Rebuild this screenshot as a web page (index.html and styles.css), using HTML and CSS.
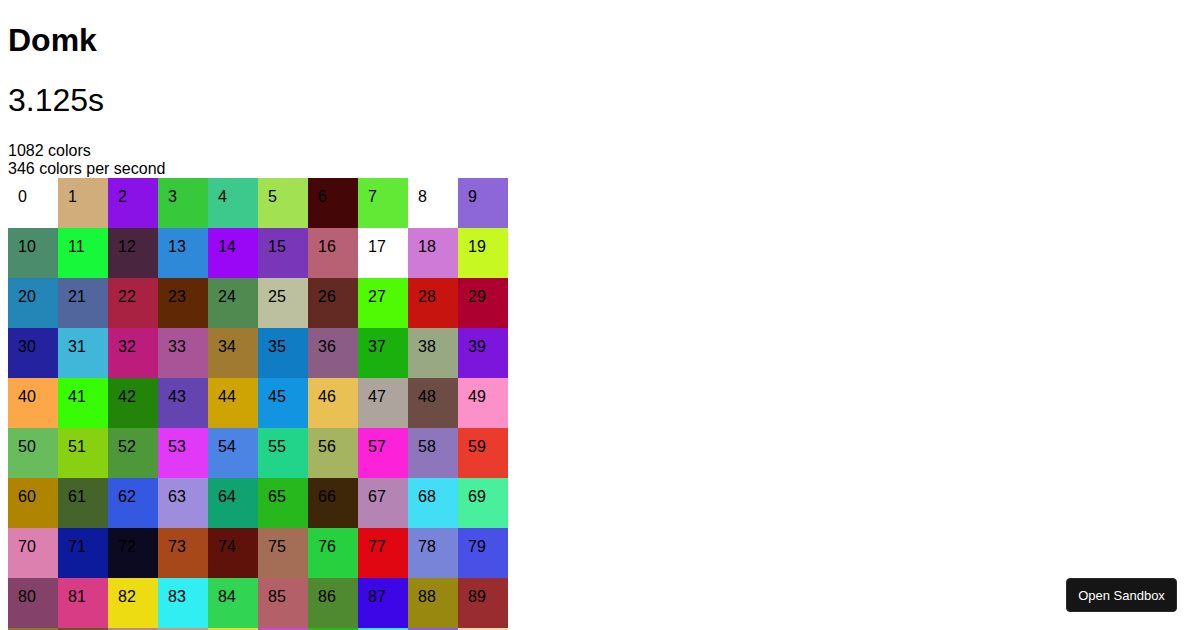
FILE: index.html
```html
<!DOCTYPE html>
<html lang="en">
<head>
<meta charset="utf-8">
<title>Domk</title>
<link rel="stylesheet" href="styles.css">
</head>
<body>
<h1 class="title">Domk</h1>
<h2 class="time">3.125s</h2>
<div class="stats">
  <div>1082 colors</div>
  <div>346 colors per second</div>
</div>
<div class="grid">
<div class="cell" style="background:#ffffff">0</div>
<div class="cell" style="background:#d2ad7c">1</div>
<div class="cell" style="background:#8a12e6">2</div>
<div class="cell" style="background:#38c83c">3</div>
<div class="cell" style="background:#3ec98c">4</div>
<div class="cell" style="background:#a2e252">5</div>
<div class="cell" style="background:#440606">6</div>
<div class="cell" style="background:#62e935">7</div>
<div class="cell" style="background:#ffffff">8</div>
<div class="cell" style="background:#8d67d8">9</div>
<div class="cell" style="background:#4a8c6c">10</div>
<div class="cell" style="background:#18f83a">11</div>
<div class="cell" style="background:#4a2540">12</div>
<div class="cell" style="background:#2e8ad8">13</div>
<div class="cell" style="background:#9a06f6">14</div>
<div class="cell" style="background:#7a36b8">15</div>
<div class="cell" style="background:#b86074">16</div>
<div class="cell" style="background:#ffffff">17</div>
<div class="cell" style="background:#d07ad8">18</div>
<div class="cell" style="background:#c8f822">19</div>
<div class="cell" style="background:#2386b6">20</div>
<div class="cell" style="background:#52669e">21</div>
<div class="cell" style="background:#aa2242">22</div>
<div class="cell" style="background:#602804">23</div>
<div class="cell" style="background:#508a50">24</div>
<div class="cell" style="background:#bcc09e">25</div>
<div class="cell" style="background:#622a22">26</div>
<div class="cell" style="background:#50fa04">27</div>
<div class="cell" style="background:#c8140e">28</div>
<div class="cell" style="background:#ae0030">29</div>
<div class="cell" style="background:#24229e">30</div>
<div class="cell" style="background:#40b6d8">31</div>
<div class="cell" style="background:#bc1c7c">32</div>
<div class="cell" style="background:#aa5498">33</div>
<div class="cell" style="background:#a07a30">34</div>
<div class="cell" style="background:#107cc4">35</div>
<div class="cell" style="background:#8a5c86">36</div>
<div class="cell" style="background:#1ab00e">37</div>
<div class="cell" style="background:#98a882">38</div>
<div class="cell" style="background:#7c16da">39</div>
<div class="cell" style="background:#fca848">40</div>
<div class="cell" style="background:#38fc04">41</div>
<div class="cell" style="background:#228408">42</div>
<div class="cell" style="background:#6444b0">43</div>
<div class="cell" style="background:#cea404">44</div>
<div class="cell" style="background:#1294e0">45</div>
<div class="cell" style="background:#e8c054">46</div>
<div class="cell" style="background:#aea49e">47</div>
<div class="cell" style="background:#6c4c44">48</div>
<div class="cell" style="background:#fc90c8">49</div>
<div class="cell" style="background:#68bc5c">50</div>
<div class="cell" style="background:#88d012">51</div>
<div class="cell" style="background:#4e983a">52</div>
<div class="cell" style="background:#e03af8">53</div>
<div class="cell" style="background:#4c84e4">54</div>
<div class="cell" style="background:#22d48a">55</div>
<div class="cell" style="background:#a4b460">56</div>
<div class="cell" style="background:#fc22da">57</div>
<div class="cell" style="background:#8e76bc">58</div>
<div class="cell" style="background:#ea3c2c">59</div>
<div class="cell" style="background:#ae8400">60</div>
<div class="cell" style="background:#44642a">61</div>
<div class="cell" style="background:#3458e0">62</div>
<div class="cell" style="background:#9e8cdc">63</div>
<div class="cell" style="background:#10a270">64</div>
<div class="cell" style="background:#26b81c">65</div>
<div class="cell" style="background:#3e2608">66</div>
<div class="cell" style="background:#b484b4">67</div>
<div class="cell" style="background:#42def6">68</div>
<div class="cell" style="background:#48ef9c">69</div>
<div class="cell" style="background:#dc80b0">70</div>
<div class="cell" style="background:#0c1a9c">71</div>
<div class="cell" style="background:#0c0a20">72</div>
<div class="cell" style="background:#a6481a">73</div>
<div class="cell" style="background:#5e120a">74</div>
<div class="cell" style="background:#a46e56">75</div>
<div class="cell" style="background:#26d03e">76</div>
<div class="cell" style="background:#e00612">77</div>
<div class="cell" style="background:#7884d8">78</div>
<div class="cell" style="background:#4850e6">79</div>
<div class="cell" style="background:#84426a">80</div>
<div class="cell" style="background:#d83c84">81</div>
<div class="cell" style="background:#eedc12">82</div>
<div class="cell" style="background:#30eef2">83</div>
<div class="cell" style="background:#32d454">84</div>
<div class="cell" style="background:#b46068">85</div>
<div class="cell" style="background:#508a30">86</div>
<div class="cell" style="background:#3c06e6">87</div>
<div class="cell" style="background:#988810">88</div>
<div class="cell" style="background:#982c2e">89</div>
<div class="cell" style="background:#857a2a">90</div>
<div class="cell" style="background:#6e5424">91</div>
<div class="cell" style="background:#b88a88">92</div>
<div class="cell" style="background:#c0a080">93</div>
<div class="cell" style="background:#e0e030">94</div>
<div class="cell" style="background:#c84ad0">95</div>
<div class="cell" style="background:#28b818">96</div>
<div class="cell" style="background:#40e8f0">97</div>
<div class="cell" style="background:#8860e8">98</div>
<div class="cell" style="background:#f0e0a8">99</div>
</div>
<a class="sandbox-btn" href="#">Open Sandbox</a>
</body>
</html>
```

FILE: styles.css
```css
html {
  overflow: hidden;
}

body {
  margin: 8px;
  font-family: "Liberation Sans", Arial, sans-serif;
  font-size: 16px;
  color: #000;
  background: #fff;
}

.title {
  font-size: 32px;
  font-weight: bold;
  margin: 14.44px 0 21.44px;
}

.time {
  font-size: 32px;
  font-weight: normal;
  margin: 23px 0 23px;
}

.stats {
  line-height: 18px;
}

.grid {
  display: flex;
  flex-wrap: wrap;
  width: 500px;
}

.cell {
  width: 50px;
  height: 50px;
  box-sizing: border-box;
  padding: 10px;
  line-height: 18px;
  color: #000;
}

.sandbox-btn {
  position: fixed;
  right: 23px;
  bottom: 18px;
  width: 111px;
  height: 34px;
  box-sizing: border-box;
  display: flex;
  align-items: center;
  justify-content: center;
  background: #151515;
  border: 1px solid #2a2a2a;
  border-radius: 4px;
  color: #fff;
  font-family: "Liberation Sans", Arial, sans-serif;
  font-size: 13px;
  text-decoration: none;
}
```
